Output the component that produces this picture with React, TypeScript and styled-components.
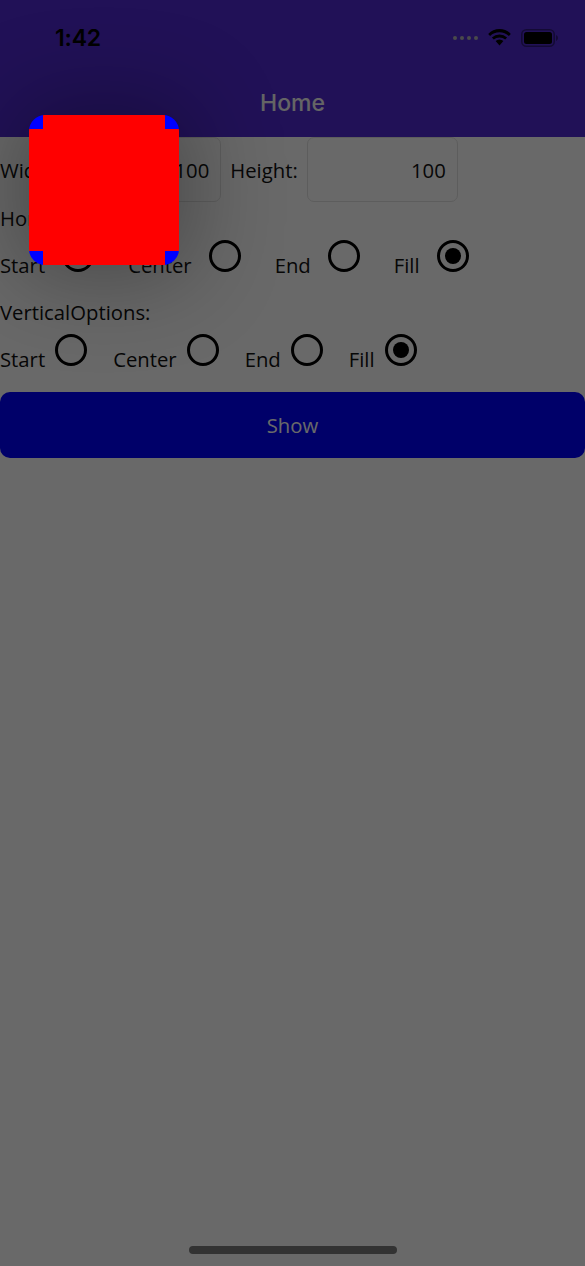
import styled, { createGlobalStyle } from 'styled-components';

const GlobalStyle = createGlobalStyle`
  html, body {
    margin: 0;
    padding: 0;
    background: #ffffff;
  }
  * {
    box-sizing: border-box;
  }
`;

const Screen = styled.div`
  position: relative;
  width: 585px;
  height: 1266px;
  overflow: hidden;
  background: #ffffff;
  font-family: "Open Sans", "Noto Sans", sans-serif;
  color: #111111;
`;

const Header = styled.header`
  background: #512bd4;
  display: flex;
  flex-direction: column;
`;

const StatusBar = styled.div`
  height: 76px;
  display: flex;
  align-items: center;
  justify-content: space-between;
  padding: 0 26px 0 55px;
`;

const Clock = styled.span`
  font-family: Inter, "Liberation Sans", sans-serif;
  font-weight: 600;
  font-size: 23px;
  color: #000000;
  letter-spacing: -0.2px;
`;

const StatusIcons = styled.div`
  display: flex;
  align-items: center;
  gap: 9px;
`;

const SignalDots = styled.div`
  display: flex;
  gap: 3px;
`;

const Dot = styled.span`
  width: 4px;
  height: 4px;
  border-radius: 50%;
  background: #b4b4b4;
`;

const NavBar = styled.div`
  height: 61px;
  display: flex;
  align-items: center;
  justify-content: center;
  padding-bottom: 7px;
`;

const NavTitle = styled.h1`
  margin: 0;
  font-family: Inter, "Liberation Sans", sans-serif;
  font-weight: 500;
  font-size: 23px;
  color: #f4f4f4;
`;

const Content = styled.main`
  display: flex;
  flex-direction: column;
`;

const SizeRow = styled.div`
  display: flex;
  align-items: center;
  gap: 9px;
  height: 65px;
`;

const Text = styled.span`
  font-size: 20.3px;
  line-height: 28px;
  color: #111111;
  white-space: nowrap;
`;

const Entry = styled.div`
  width: 151px;
  height: 65px;
  border: 1px solid #e2e2e2;
  border-radius: 7px;
  display: flex;
  align-items: center;
  justify-content: flex-end;
  padding-right: 11px;
  font-size: 20.3px;
  color: #111111;
`;

const SectionLabel = styled(Text)<{ $top: number }>`
  display: block;
  margin-top: ${(p) => p.$top}px;
`;

const RadioRow = styled.div<{ $gap: number }>`
  display: flex;
  height: 52px;
  gap: ${(p) => p.$gap}px;
`;

const RadioItem = styled.label<{ $gap: number }>`
  display: flex;
  align-items: flex-start;
  gap: ${(p) => p.$gap}px;
`;

const RadioText = styled(Text)`
  margin-top: 19px;
`;

const RadioCircle = styled.span<{ $checked?: boolean }>`
  width: 32px;
  height: 32px;
  margin-top: 8px;
  border: 3px solid #000000;
  border-radius: 50%;
  display: flex;
  align-items: center;
  justify-content: center;

  &::after {
    content: '';
    width: 16px;
    height: 16px;
    border-radius: 50%;
    background: #000000;
    display: ${(p) => (p.$checked ? 'block' : 'none')};
  }
`;

const ShowButton = styled.button`
  margin-top: 14px;
  height: 66px;
  width: 100%;
  border: none;
  border-radius: 10px;
  background: #0000ff;
  color: #ffffff;
  font-family: "Open Sans", "Noto Sans", sans-serif;
  font-size: 20.3px;
`;

const Dimmer = styled.div`
  position: absolute;
  inset: 0;
  background: rgba(0, 0, 0, 0.59);
`;

const Popup = styled.div`
  position: absolute;
  left: 29px;
  top: 115px;
  width: 150px;
  height: 150px;
  border-radius: 16px;
  background:
    linear-gradient(#ff0000, #ff0000) center / 100% calc(100% - 28px) no-repeat,
    linear-gradient(#ff0000, #ff0000) center / calc(100% - 28px) 100% no-repeat,
    #0000ff;
  box-shadow: 0 0 90px 14px rgba(0, 0, 0, 0.3);
`;

const HomeIndicator = styled.div`
  position: absolute;
  left: 189px;
  bottom: 12px;
  width: 208px;
  height: 8px;
  border-radius: 4px;
  background: #333333;
`;

const options = ['Start', 'Center', 'End', 'Fill'];

function WifiIcon() {
  return (
    <svg width="25" height="18" viewBox="0 0 25 18">
      <path d="M12.5 3.2c3.6 0 6.9 1.4 9.4 3.7l1.9-2A16.1 16.1 0 0 0 12.5 0 16.1 16.1 0 0 0 1.2 4.9l1.9 2a13.5 13.5 0 0 1 9.4-3.7z" fill="#000" />
      <path d="M12.5 8.4c2.2 0 4.2.8 5.7 2.2l1.9-2a11.1 11.1 0 0 0-15.2 0l1.9 2a8.3 8.3 0 0 1 5.7-2.2z" fill="#000" />
      <path d="M8.6 12l3.9 4.6 3.9-4.6a5.8 5.8 0 0 0-7.8 0z" fill="#000" />
    </svg>
  );
}

function BatteryIcon() {
  return (
    <svg width="38" height="18" viewBox="0 0 38 18">
      <rect x="0.8" y="0.8" width="32.4" height="16.4" rx="4.5" fill="none" stroke="#000" strokeOpacity="0.4" strokeWidth="1.6" />
      <rect x="3" y="3" width="28" height="12" rx="2.5" fill="#000" />
      <path d="M35 6v6c1.2-.4 2-1.6 2-3s-.8-2.6-2-3z" fill="#000" fillOpacity="0.4" />
    </svg>
  );
}

function RadioGroup({ selected, labelGap, itemGap }: { selected: string; labelGap: number; itemGap: number }) {
  return (
    <RadioRow $gap={itemGap}>
      {options.map((o) => (
        <RadioItem key={o} $gap={labelGap}>
          <RadioText>{o}</RadioText>
          <RadioCircle $checked={o === selected} />
        </RadioItem>
      ))}
    </RadioRow>
  );
}

export default function App() {
  return (
    <>
      <GlobalStyle />
      <Screen>
        <Header>
          <StatusBar>
            <Clock>1:42</Clock>
            <StatusIcons>
              <SignalDots>
                <Dot />
                <Dot />
                <Dot />
                <Dot />
              </SignalDots>
              <WifiIcon />
              <BatteryIcon />
            </StatusIcons>
          </StatusBar>
          <NavBar>
            <NavTitle>Home</NavTitle>
          </NavBar>
        </Header>

        <Content>
          <SizeRow>
            <Text>Width:</Text>
            <Entry>100</Entry>
            <Text>Height:</Text>
            <Entry>100</Entry>
          </SizeRow>

          <SectionLabel $top={2}>HorizontalOptions:</SectionLabel>
          <RadioGroup selected="Fill" labelGap={17} itemGap={34} />

          <SectionLabel $top={14}>VerticalOptions:</SectionLabel>
          <RadioGroup selected="Fill" labelGap={10} itemGap={26} />

          <ShowButton>Show</ShowButton>
        </Content>

        <Dimmer />
        <Popup />
        <HomeIndicator />
      </Screen>
    </>
  );
}
